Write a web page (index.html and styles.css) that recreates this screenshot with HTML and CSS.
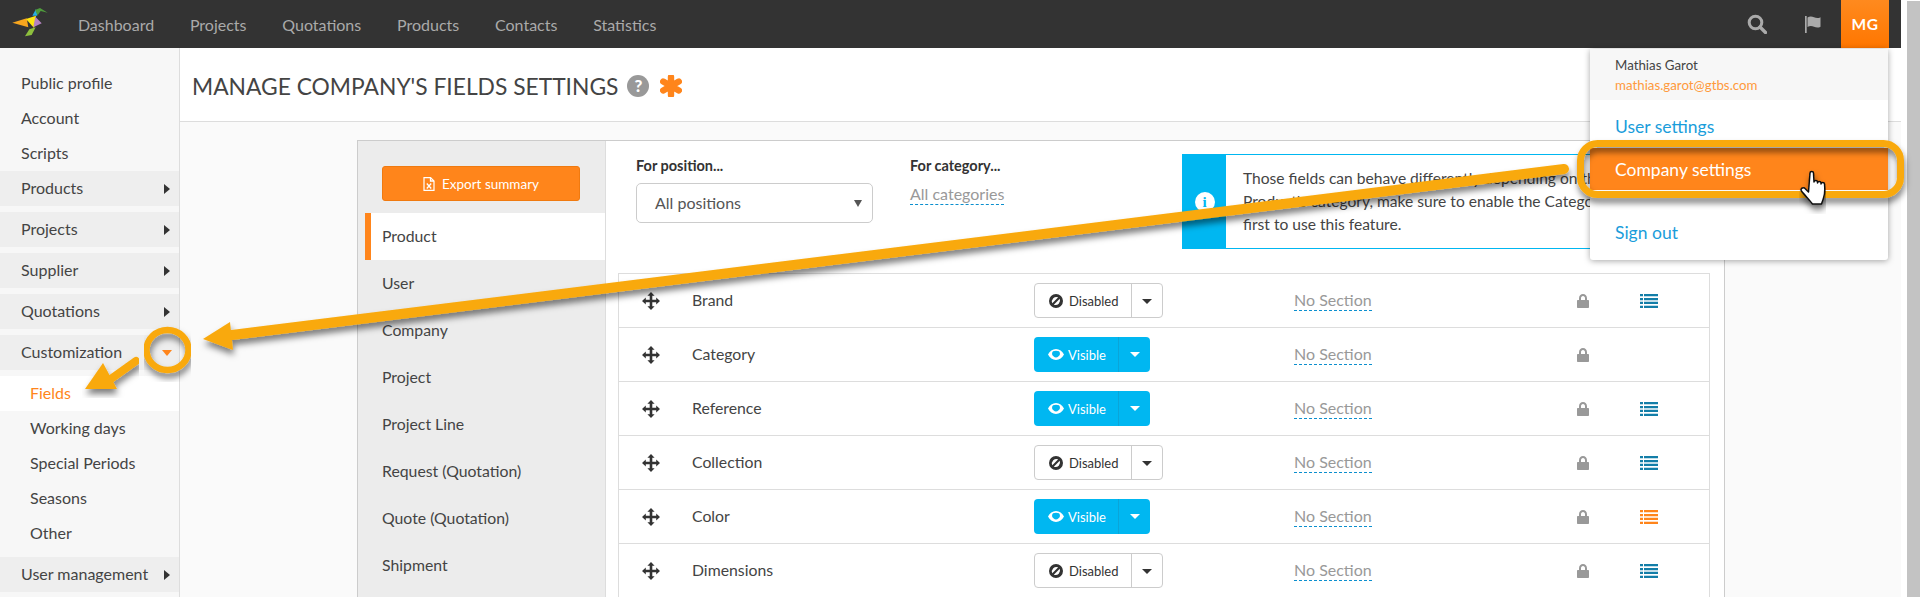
FILE: index.html
```html
<!DOCTYPE html>
<html lang="en">
<head>
<meta charset="utf-8">
<title>Manage company's fields settings</title>
<link rel="stylesheet" href="styles.css">
</head>
<body>
<svg class="defs" width="0" height="0" aria-hidden="true">
  <defs>
    <symbol id="i-move" viewBox="0 0 18 18"><path d="M9 0L12.600 3.800H10.300V7.700H14.200V5.400L18 9L14.200 12.600V10.300H10.300V14.200H12.600L9 18L5.400 14.200H7.700V10.300H3.800V12.600L0 9L3.800 5.400V7.700H7.700V3.800H5.400Z"/></symbol>
    <symbol id="i-lock" viewBox="0 0 12 14"><path d="M2 6V4.200C2 1.800 3.700 0 6 0s4 1.800 4 4.200V6h1c.6 0 1 .4 1 1v6c0 .6-.4 1-1 1H1c-.6 0-1-.4-1-1V7c0-.6.4-1 1-1zm2 0h4V4.200C8 3 7.200 2 6 2S4 3 4 4.200z"/></symbol>
    <symbol id="i-list" viewBox="0 0 18 14"><path d="M0 0h3v2.300H0zM4 0h14v2.300H4zM0 3.900h3v2.300H0zM4 3.900h14v2.300H4zM0 7.800h3v2.300H0zM4 7.800h14v2.300H4zM0 11.700h3V14H0zM4 11.700h14V14H4z"/></symbol>
    <symbol id="i-ban" viewBox="0 0 14 14"><path fill-rule="evenodd" d="M7 0a7 7 0 1 1 0 14A7 7 0 0 1 7 0zM3.300 9.200l5.900-5.900A4.500 4.500 0 0 0 3.300 9.200zM4.800 10.700a4.500 4.500 0 0 0 5.900-5.900z"/></symbol>
    <symbol id="i-eye" viewBox="0 0 16 11"><path fill-rule="evenodd" d="M8 0c3.400 0 6.300 2.200 8 5.500C14.300 8.800 11.400 11 8 11S1.700 8.800 0 5.500C1.700 2.200 4.600 0 8 0zM5 2.200a3.800 3.800 0 1 0 6 0 9 9 0 0 0-6 0z"/></symbol>
  </defs>
</svg>
<div class="viewport">
  <div class="page">
    <header class="topbar">
      <svg class="logo" viewBox="0 0 144 144" aria-label="Logo">
        <polygon points="37,68 80,55 85,82" fill="#f7a51e"/>
        <polygon points="78,57 108,47 102,84" fill="#fde60f"/>
        <polygon points="106,50 125,70 100,82" fill="#b483c0"/>
        <polygon points="97,47 108,27 112,47" fill="#27aee0"/>
        <polygon points="105,30 120,24 143,38 122,33 113,46" fill="#4f9c3c"/>
        <polygon points="75,109 88,88 107,82 95,105" fill="#8dbf3d"/>
      </svg>
      <nav class="nav">
        <a>Dashboard</a><a>Projects</a><a>Quotations</a><a>Products</a><a>Contacts</a><a>Statistics</a>
      </nav>
      <div class="tools">
        <svg class="tool-search" viewBox="0 0 20 20"><circle cx="8.500" cy="8.500" r="6.300" fill="none" stroke="#aaa" stroke-width="3"/><path d="M13 13l5.500 5.500" stroke="#aaa" stroke-width="3.400" stroke-linecap="round"/></svg>
        <svg class="tool-flag" viewBox="0 0 20 18"><path d="M1 1h1.700v17H1zM3.500 2.500c2-1.500 4.500-1.300 6.500-.3s4.500 1.200 6.500 0v9.500c-2 1.200-4.500 1-6.500 0s-4.500-1.200-6.500.3z" fill="#aaa"/></svg>
        <div class="avatar">MG</div>
      </div>
    </header>
    <div class="layout">
      <aside class="side">
        <a class="side-link">Public profile</a>
        <a class="side-link">Account</a>
        <a class="side-link">Scripts</a>
        <a class="side-group">Products<i class="tri"></i></a>
        <a class="side-group">Projects<i class="tri"></i></a>
        <a class="side-group">Supplier<i class="tri"></i></a>
        <a class="side-group">Quotations<i class="tri"></i></a>
        <a class="side-group">Customization<i class="tri-down"></i></a>
        <div class="sub">
          <a class="sub-link active">Fields</a>
          <a class="sub-link">Working days</a>
          <a class="sub-link">Special Periods</a>
          <a class="sub-link">Seasons</a>
          <a class="sub-link">Other</a>
        </div>
        <a class="side-group">User management<i class="tri"></i></a>
      </aside>
      <main class="main">
        <div class="titlebar">
          <h1>MANAGE COMPANY'S FIELDS SETTINGS</h1>
          <span class="help">?</span>
          <svg class="star" viewBox="0 0 22 22"><path d="M11 2v18M3.200 6.500l15.600 9M18.800 6.500l-15.600 9" stroke="#ff851b" stroke-width="6.400" stroke-linecap="round"/></svg>
        </div>
        <section class="panel">
          <div class="tabs">
            <button class="export">
              <svg viewBox="0 0 12 14" width="12" height="14"><path d="M1 .6h6.500L11 4v9.400H1z" fill="none" stroke="#fff" stroke-width="1.200"/><path d="M7.500.6V4H11M3.800 6.500l4.400 5M8.200 6.500l-4.400 5" fill="none" stroke="#fff" stroke-width="1.300"/></svg>
              Export summary
            </button>
            <a class="tab active">Product</a>
            <a class="tab">User</a>
            <a class="tab">Company</a>
            <a class="tab">Project</a>
            <a class="tab">Project Line</a>
            <a class="tab">Request (Quotation)</a>
            <a class="tab">Quote (Quotation)</a>
            <a class="tab">Shipment</a>
          </div>
          <div class="content">
            <div class="filters">
              <div class="filter-pos">
                <div class="filter-label">For position...</div>
                <div class="select">All positions<i class="select-caret"></i></div>
              </div>
              <div class="filter-cat">
                <div class="filter-label">For category...</div>
                <a class="editable cat-value">All categories</a>
              </div>
              <div class="info">
                <div class="info-side"><span class="info-dot">i</span></div>
                <p>Those fields can behave differently depending on the<br>Product's category, make sure to enable the Category field<br>first to use this feature.</p>
              </div>
            </div>
            <div class="table">
              <div class="row">
                <svg class="move"><use href="#i-move"/></svg><span class="name">Brand</span>
                <div class="split off"><span class="split-main"><svg class="ban"><use href="#i-ban"/></svg>Disabled</span><span class="split-caret"></span></div>
                <div><a class="editable">No Section</a></div>
                <svg class="lock"><use href="#i-lock"/></svg><svg class="list"><use href="#i-list"/></svg>
              </div>
              <div class="row">
                <svg class="move"><use href="#i-move"/></svg><span class="name">Category</span>
                <div class="split on"><span class="split-main"><svg class="eye"><use href="#i-eye"/></svg>Visible</span><span class="split-caret"></span></div>
                <div><a class="editable">No Section</a></div>
                <svg class="lock"><use href="#i-lock"/></svg>
              </div>
              <div class="row">
                <svg class="move"><use href="#i-move"/></svg><span class="name">Reference</span>
                <div class="split on"><span class="split-main"><svg class="eye"><use href="#i-eye"/></svg>Visible</span><span class="split-caret"></span></div>
                <div><a class="editable">No Section</a></div>
                <svg class="lock"><use href="#i-lock"/></svg><svg class="list"><use href="#i-list"/></svg>
              </div>
              <div class="row">
                <svg class="move"><use href="#i-move"/></svg><span class="name">Collection</span>
                <div class="split off"><span class="split-main"><svg class="ban"><use href="#i-ban"/></svg>Disabled</span><span class="split-caret"></span></div>
                <div><a class="editable">No Section</a></div>
                <svg class="lock"><use href="#i-lock"/></svg><svg class="list"><use href="#i-list"/></svg>
              </div>
              <div class="row">
                <svg class="move"><use href="#i-move"/></svg><span class="name">Color</span>
                <div class="split on"><span class="split-main"><svg class="eye"><use href="#i-eye"/></svg>Visible</span><span class="split-caret"></span></div>
                <div><a class="editable">No Section</a></div>
                <svg class="lock"><use href="#i-lock"/></svg><svg class="list list-orange"><use href="#i-list"/></svg>
              </div>
              <div class="row">
                <svg class="move"><use href="#i-move"/></svg><span class="name">Dimensions</span>
                <div class="split off"><span class="split-main"><svg class="ban"><use href="#i-ban"/></svg>Disabled</span><span class="split-caret"></span></div>
                <div><a class="editable">No Section</a></div>
                <svg class="lock"><use href="#i-lock"/></svg><svg class="list"><use href="#i-list"/></svg>
              </div>
            </div>
          </div>
        </section>
      </main>
    </div>
    <div class="menu">
      <div class="menu-head">
        <div class="menu-name">Mathias Garot</div>
        <div class="menu-mail">mathias.garot@gtbs.com</div>
      </div>
      <a class="menu-user">User settings</a>
      <a class="menu-company">Company settings</a>
      <a class="menu-out">Sign out</a>
    </div>
  </div>
  <div class="gutter"><div class="thumb"></div></div>
  <svg class="marks" viewBox="0 0 1920 597" width="1920" height="597" aria-hidden="true">
    <defs>
      <filter id="sh" x="-5%" y="-20%" width="110%" height="150%">
        <feDropShadow dx="1" dy="5" stdDeviation="3" flood-color="#000" flood-opacity=".5"/>
      </filter>
    </defs>
    <g filter="url(#sh)">
      <path d="M232 335L1564 169" stroke="#f9a90b" stroke-width="10" stroke-linecap="round" fill="none"/>
      <polygon points="203,339 230,322 233,350" fill="#f9a90b"/>
    </g>
    <g filter="url(#sh)">
      <path d="M136 361L108 381" stroke="#f9a90b" stroke-width="8" stroke-linecap="round" fill="none"/>
      <polygon points="85,389 103,363 117,389" fill="#f9a90b"/>
    </g>
    <ellipse filter="url(#sh)" cx="167.500" cy="350" rx="21" ry="20" fill="none" stroke="#f9a90b" stroke-width="6.500"/>
    <rect filter="url(#sh)" x="1580.500" y="143.500" width="320" height="51" rx="17" fill="none" stroke="#f9a90b" stroke-width="7"/>
    <path filter="url(#sh)" d="M1810 173c0-2 3.500-2 3.500 0l.5 9c0-2 3.500-2 3.500 0v1c0-2 3.500-2 3.500 0v1c0-2 3.500-2 3.500 0 .5 5 .5 10-1 14-.7 3-2 5-2 6h-9c-3-4-8-9-11-13-1.500-2 1-4 3-3l4 4z" fill="#fff" stroke="#111" stroke-width="1.500" stroke-linejoin="round"/>
  </svg>
</div>
</body>
</html>
```
FILE: styles.css
```css
* { box-sizing: border-box; }
html, body { margin: 0; height: 597px; overflow: hidden; background: #fff; }
body { font-family: Lato, "Noto Sans", sans-serif; font-size: 16px; color: #444; }
a { display: block; }
.defs { position: absolute; }
.viewport { position: relative; display: flex; width: 1920px; height: 597px; overflow: hidden; }
.page { position: relative; width: 1901px; height: 597px; display: flex; flex-direction: column; flex: none; }
.gutter { flex: 1; padding: 1px 0 0 6px; }
.thumb { height: 596px; background: #c3c3c3; }
.marks { position: absolute; left: 0; top: 0; pointer-events: none; }

.topbar { height: 48px; flex: none; background: #333; display: flex; align-items: center; }
.logo { width: 48px; height: 48px; flex: none; margin-right: 12px; }
.nav { display: flex; }
.nav a { color: #aaa; padding: 0 17.900px; font-size: 16px; }
.tools { margin-left: auto; display: flex; align-items: center; height: 48px; margin-right: 12px; }
.tool-search { width: 20px; height: 20px; margin-right: 37px; }
.tool-flag { width: 20px; height: 18px; margin-right: 17px; }
.avatar { width: 48px; height: 48px; background: linear-gradient(#ff8a1e, #ff7600); color: #fff; font-weight: 700; font-size: 15.500px; display: flex; align-items: center; justify-content: center; letter-spacing: .5px; }

.layout { flex: 1; display: flex; min-height: 0; }
.side { width: 180px; flex: none; background: #f7f7f7; border-right: 1px solid #ddd; padding-top: 18px; }
.side-link, .side-group, .sub-link { height: 35px; line-height: 33px; color: #444; font-size: 16px; }
.side-link, .side-group { padding-left: 21px; }
.side-group { position: relative; background: #eee; margin-bottom: 6px; }
.tri { position: absolute; left: 164px; top: 13px; border-left: 6px solid #333; border-top: 5px solid transparent; border-bottom: 5px solid transparent; }
.tri-down { position: absolute; left: 162px; top: 15px; border-top: 6px solid #ff851b; border-left: 5px solid transparent; border-right: 5px solid transparent; }
.sub { margin-bottom: 6px; }
.sub-link { padding-left: 30px; }
.sub-link.active { background: #fff; color: #ff851b; }

.main { flex: 1; min-width: 0; background: #fafafa; }
.titlebar { height: 74px; background: #fff; border-bottom: 1px solid #ddd; display: flex; align-items: center; padding: 2px 0 0 12px; }
h1 { margin: 0; font-weight: 400; font-size: 22.800px; color: #444; white-space: nowrap; }
.help { width: 22px; height: 22px; border-radius: 50%; margin-left: 9px; background: #999; color: #fff; font-weight: 900; font-size: 17px; display: flex; align-items: center; justify-content: center; }
.star { width: 22px; height: 22px; margin-left: 11px; }

.panel { margin: 18px 0 0 177px; width: 1368px; height: 600px; border: 1px solid #ccc; display: flex; background: #fff; }
.tabs { width: 248px; flex: none; background: #ececec; border-right: 1px solid #ddd; padding: 25px 0 0 7px; }
.export { display: flex; align-items: center; justify-content: center; gap: 7px; width: 198px; height: 35px; margin: 0 0 12px 17px; padding: 0; border: 1px solid #f07a10; border-radius: 3px; background: #ff851b; color: #fff; font: 13.500px Lato, sans-serif; }
.tab { height: 47px; line-height: 45px; padding-left: 17px; color: #444; font-size: 15.800px; }
.tab.active { background: #fff; border-left: 6px solid #ff851b; padding-left: 11px; }

.content { flex: 1; min-width: 0; padding-top: 13px; }
.filters { display: flex; height: 95px; padding-left: 30px; }
.filter-pos { width: 237px; flex: none; margin-right: 37px; }
.filter-cat { width: 272px; flex: none; }
.filter-label { font-weight: 700; font-size: 14.500px; color: #333; height: 21px; line-height: 21px; margin-top: 1px; }
.select { position: relative; margin-top: 7px; height: 40px; line-height: 38px; border: 1px solid #ccc; border-radius: 5px; padding-left: 18px; font-size: 16px; color: #555; background: #fff; }
.select-caret { position: absolute; right: 10px; top: 16px; border-top: 7px solid #555; border-left: 4px solid transparent; border-right: 4px solid transparent; }
.editable { display: inline-block; color: #999; border-bottom: 1px dashed #0b8fce; font-size: 16px; line-height: 20px; }
.cat-value { margin-top: 8px; }
.info { width: 528px; flex: none; display: flex; border: 1px solid #00b7f1; background: #fff; }
.info-side { width: 43px; background: #00b7f1; display: flex; align-items: center; justify-content: center; }
.info-dot { width: 20px; height: 20px; border-radius: 50%; background: #fff; color: #00b7f1; font: 700 15px/20px "Liberation Serif", serif; text-align: center; }
.info p { margin: 0; padding: 12px 0 0 17px; font-size: 15.600px; line-height: 23px; color: #444; white-space: nowrap; overflow: hidden; }

.table { margin: 24px 0 0 12px; width: 1092px; border: 1px solid #ddd; border-bottom: 0; }
.row { display: grid; grid-template-columns: 73px 342px 260px 283px 63px 1fr; align-items: center; height: 54px; border-bottom: 1px solid #ddd; font-size: 15.800px; color: #444; }
.name { line-height: 19px; padding-bottom: 2px; }
.move { width: 18px; height: 18px; margin-left: 23px; fill: #333; }
.lock { width: 12px; height: 14px; fill: #999; }
.list { width: 18px; height: 14px; fill: #137ea8; }
.list-orange { fill: #ff851b; }
.split { display: inline-flex; height: 35px; border-radius: 4px; font-size: 13px; justify-self: start; }
.split-main { display: flex; align-items: center; padding-left: 14px; gap: 6px; }
.split-caret { position: relative; flex: none; width: 31px; }
.split-caret::after { content: ""; position: absolute; left: 10px; top: 15px; border-top: 5px solid #333; border-left: 5px solid transparent; border-right: 5px solid transparent; }
.off { width: 129px; border: 1px solid #ccc; background: #fff; color: #333; }
.off .split-main { width: 97px; }
.off .split-caret { border-left: 1px solid #ccc; }
.on { width: 116px; background: #00b7f1; color: #fff; }
.on .split-main { width: 84px; gap: 4px; }
.on .split-caret { width: 32px; border-left: 1px solid #0aa5d8; }
.on .split-caret::after { border-top-color: #fff; left: 11px; }
.ban { width: 14px; height: 14px; fill: #333; flex: none; }
.eye { width: 16px; height: 11px; fill: #fff; flex: none; }

.menu { position: absolute; left: 1590px; top: 49px; width: 298px; height: 211px; background: #fff; box-shadow: 0 1px 6px rgba(0,0,0,.35); border-radius: 0 0 3px 3px; }
.menu-head { height: 51px; background: #f7f7f7; padding: 6px 0 0 25px; }
.menu-name { font-size: 13.300px; line-height: 20px; color: #444; }
.menu-mail { font-size: 13.300px; line-height: 20px; color: #ff9a3c; }
.menu-user, .menu-company, .menu-out { padding-left: 25px; font-size: 17.500px; color: #1a9ddb; }
.menu-user { height: 48px; line-height: 54px; }
.menu-company { height: 43px; line-height: 43px; background: #ff851b; color: #fff; border-bottom: 1px solid #fff; }
.menu-out { margin-top: 24px; line-height: 36px; }
```
